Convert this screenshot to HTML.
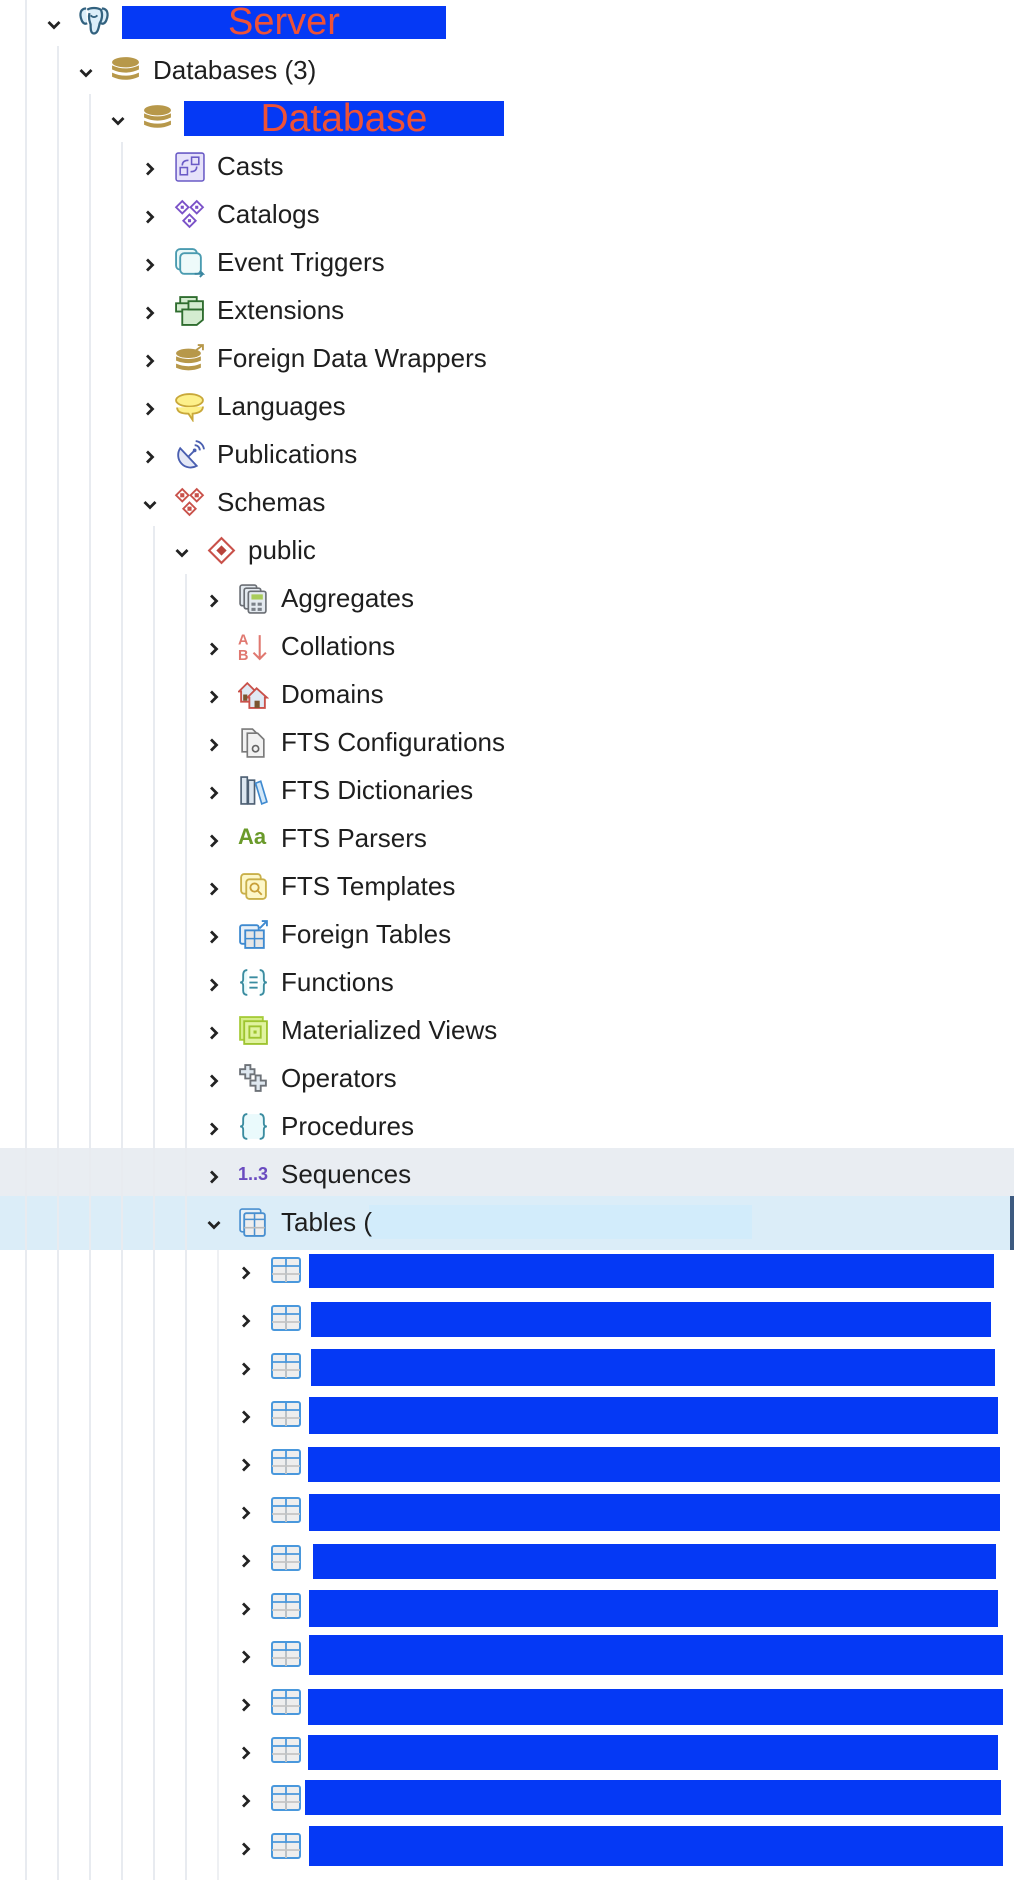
<!DOCTYPE html>
<html><head><meta charset="utf-8"><style>
body{margin:0;width:1014px;height:1880px;background:#fff;position:relative;overflow:hidden;font-family:"Liberation Sans",Arial,sans-serif;}
.vl{position:absolute;width:2px;background:#e8ebf0;bottom:0}
.band{position:absolute;left:0;width:1014px}
.c{position:absolute;width:14px;height:14px}
.i{position:absolute;width:31px;height:31px}
.t{position:absolute;font-size:26px;line-height:50px;color:#1e1e1e;white-space:nowrap}
.b{position:absolute;background:#0539f5;height:37px}
</style></head><body>
<div class="band" style="top:1148px;height:48px;background:#e9edf2"></div>
<div class="band" style="top:1196px;height:54px;background:#dbedf8"></div>
<div style="position:absolute;left:369px;top:1205px;width:383px;height:34px;background:#d2ecfb"></div>
<div style="position:absolute;left:1010px;top:1196px;width:4px;height:54px;background:#3d5a80"></div>

<div class="vl" style="left:25px;top:0"></div>
<div class="vl" style="left:57px;top:46px"></div>
<div class="vl" style="left:89px;top:94px"></div>
<div class="vl" style="left:121px;top:142px"></div>
<div class="vl" style="left:153px;top:526px"></div>
<div class="vl" style="left:185px;top:574px"></div>
<div class="vl" style="left:217px;top:1250px;background:#eef0f3"></div>
<div class="band" style="top:1148px;height:48px;background:#e9edf2;left:190px;width:824px"></div>

<svg width="0" height="0" style="position:absolute"><defs>
<symbol id="tb" viewBox="0 0 30 26"><rect x="1" y="1" width="28" height="24" rx="2" fill="#eeeeee" stroke="#4a98dc" stroke-width="2"/><path d="M15 1 L15 25 M1 9 L29 9" stroke="#4a98dc" stroke-width="1.8"/><path d="M1 17 L29 17" stroke="#c4c4c4" stroke-width="1.8"/><path d="M15 10 L15 25" stroke="#c4c4c4" stroke-width="1.8"/></symbol>
<symbol id="ch" viewBox="0 0 14 14"><path d="M4 1.5 L9.5 7 L4 12.5" fill="none" stroke="#222" stroke-width="2.8"/></symbol>
<symbol id="dn" viewBox="0 0 14 14"><path d="M1.5 4 L7 9.5 L12.5 4" fill="none" stroke="#222" stroke-width="2.8"/></symbol>
</defs></svg>

<!-- Server row -->
<svg class="c" style="left:47px;top:18px"><use href="#dn"/></svg>
<svg class="i" style="left:77px;top:4px;width:34px;height:34px" viewBox="0 0 30 30"><path d="M8 4 C3 4 2 9 4 14 C5 17 7 18 9 17 M22 4 C27 4 28 9 26 14 C25 17 23 18 21 17 M9 5 C12 3 18 3 21 5 C23 9 22 14 20 17 C19 22 18 26 15 26 C12 26 12 22 12 18 C11 15 10 12 11 8" fill="#dbeef9" stroke="#33627f" stroke-width="2"/><path d="M12 10 C14 12 16 12 18 10" fill="none" stroke="#33627f" stroke-width="1.6"/></svg>
<div style="position:absolute;left:122px;top:6px;width:324px;height:33px;background:#0539f5"></div>
<div style="position:absolute;left:122px;top:2px;width:324px;text-align:center;font-size:38px;line-height:40px;color:#ee5237">Server</div>

<!-- Databases -->
<svg class="c" style="left:79px;top:66px"><use href="#dn"/></svg>
<svg class="i" style="left:110px;top:55px" viewBox="0 0 30 30"><g fill="#b7984a"><ellipse cx="15" cy="7" rx="13" ry="5"/><path d="M2 10 Q15 16 28 10 L28 14 Q15 20 2 14Z"/><path d="M2 17 Q15 23 28 17 L28 21 Q15 27 2 21Z"/></g></svg>
<div class="t" style="left:153px;top:45px">Databases (3)</div>

<!-- Database -->
<svg class="c" style="left:111px;top:114px"><use href="#dn"/></svg>
<svg class="i" style="left:142px;top:103px" viewBox="0 0 30 30"><g fill="#b7984a"><ellipse cx="15" cy="7" rx="13" ry="5"/><path d="M2 10 Q15 16 28 10 L28 14 Q15 20 2 14Z"/><path d="M2 17 Q15 23 28 17 L28 21 Q15 27 2 21Z"/></g></svg>
<div style="position:absolute;left:184px;top:101px;width:320px;height:35px;background:#0539f5"></div>
<div style="position:absolute;left:184px;top:98px;width:320px;text-align:center;font-size:39px;line-height:42px;color:#ee5237">Database</div>

<!-- level 3 rows -->
<svg class="c" style="left:143px;top:162px"><use href="#ch"/></svg>
<svg class="i" style="left:174px;top:151px" viewBox="0 0 30 30"><rect x="2" y="2" width="27" height="27" rx="2" fill="#e6e2fa" stroke="#6a5bc6" stroke-width="1.5"/><rect x="6" y="16" width="7" height="7" fill="none" stroke="#6a5bc6" stroke-width="1.5"/><rect x="17" y="6" width="7" height="7" fill="none" stroke="#6a5bc6" stroke-width="1.5"/><path d="M8 14 Q8 9 14 9 M22 15 Q22 20 16 20" fill="none" stroke="#6a5bc6" stroke-width="1.5"/></svg>
<div class="t" style="left:217px;top:141px">Casts</div>

<svg class="c" style="left:143px;top:210px"><use href="#ch"/></svg>
<svg class="i" style="left:174px;top:199px" viewBox="0 0 30 30"><g fill="none" stroke="#7b52c8" stroke-width="1.8"><path d="M8 2 L14 8 L8 14 L2 8Z M22 2 L28 8 L22 14 L16 8Z M15 15 L21 21 L15 27 L9 21Z"/></g><g fill="#7b52c8"><rect x="6.5" y="6.5" width="3" height="3"/><rect x="20.5" y="6.5" width="3" height="3"/><rect x="13.5" y="19.5" width="3" height="3"/></g></svg>
<div class="t" style="left:217px;top:189px">Catalogs</div>

<svg class="c" style="left:143px;top:258px"><use href="#ch"/></svg>
<svg class="i" style="left:174px;top:247px" viewBox="0 0 30 30"><rect x="2" y="2" width="20" height="20" rx="4" fill="#e8f8f8" stroke="#4a9bb0" stroke-width="1.8"/><rect x="6" y="6" width="20" height="20" rx="4" fill="#eefafa" stroke="#4a9bb0" stroke-width="1.8"/><path d="M20 26 L28 26 L25 23 M28 26 L25 29" fill="none" stroke="#3a86a0" stroke-width="1.8"/></svg>
<div class="t" style="left:217px;top:237px">Event Triggers</div>

<svg class="c" style="left:143px;top:306px"><use href="#ch"/></svg>
<svg class="i" style="left:174px;top:295px" viewBox="0 0 30 30"><g fill="#d4ecd0" stroke="#2f6d2f" stroke-width="1.8"><rect x="6" y="2" width="16" height="8"/><rect x="2" y="8" width="14" height="8"/><path d="M8 14 L28 14 L28 24 L22 29 L8 29Z"/><rect x="14" y="6" width="14" height="8"/></g></svg>
<div class="t" style="left:217px;top:285px">Extensions</div>

<svg class="c" style="left:143px;top:354px"><use href="#ch"/></svg>
<svg class="i" style="left:174px;top:343px" viewBox="0 0 30 30"><g fill="#b7984a"><ellipse cx="14" cy="10" rx="12" ry="4.5"/><path d="M2 13 Q14 18 26 13 L26 17 Q14 22 2 17Z"/><path d="M2 20 Q14 25 26 20 L26 24 Q14 29 2 24Z"/></g><path d="M20 8 L28 2 M23 2 L28 2 L28 7" fill="none" stroke="#b7984a" stroke-width="1.8"/></svg>
<div class="t" style="left:217px;top:333px">Foreign Data Wrappers</div>

<svg class="c" style="left:143px;top:402px"><use href="#ch"/></svg>
<svg class="i" style="left:174px;top:391px" viewBox="0 0 30 30"><g fill="#fdf08a" stroke="#c9a83a" stroke-width="1.8"><ellipse cx="15" cy="9" rx="13" ry="6"/><path d="M3 16 Q3 22 14 22 L18 28 L18 22 Q28 21 28 15"/></g></svg>
<div class="t" style="left:217px;top:381px">Languages</div>

<svg class="c" style="left:143px;top:450px"><use href="#ch"/></svg>
<svg class="i" style="left:174px;top:439px" viewBox="0 0 30 30"><path d="M6 9 A12 12 0 0 0 22 26 Z" fill="#e4e8f6" stroke="#4a5fb0" stroke-width="1.8"/><path d="M14 17 L20 11 M20 6 A5 5 0 0 1 25 11 M21 2 A9 9 0 0 1 29 10" fill="none" stroke="#4a5fb0" stroke-width="1.8"/><circle cx="20" cy="11" r="1.8" fill="#4a5fb0"/></svg>
<div class="t" style="left:217px;top:429px">Publications</div>

<svg class="c" style="left:143px;top:498px"><use href="#dn"/></svg>
<svg class="i" style="left:174px;top:487px" viewBox="0 0 30 30"><g fill="none" stroke="#c9514a" stroke-width="1.8"><path d="M8 2 L14 8 L8 14 L2 8Z M22 2 L28 8 L22 14 L16 8Z M15 15 L21 21 L15 27 L9 21Z"/></g><g fill="#c9514a"><rect x="6" y="6" width="4" height="4"/><rect x="20" y="6" width="4" height="4"/><rect x="13" y="19" width="4" height="4"/></g></svg>
<div class="t" style="left:217px;top:477px">Schemas</div>

<!-- public -->
<svg class="c" style="left:175px;top:546px"><use href="#dn"/></svg>
<svg class="i" style="left:206px;top:535px" viewBox="0 0 30 30"><path d="M15 3 L27 15 L15 27 L3 15Z" fill="#fff" stroke="#c9514a" stroke-width="2"/><path d="M15 10 L20 15 L15 20 L10 15Z" fill="#b8443c"/></svg>
<div class="t" style="left:248px;top:525px">public</div>

<!-- level 5 -->
<svg class="c" style="left:207px;top:594px"><use href="#ch"/></svg>
<svg class="i" style="left:238px;top:583px" viewBox="0 0 30 30"><g stroke="#6b6f75" stroke-width="1.6"><rect x="2" y="2" width="16" height="20" rx="2" fill="#e4eaf0"/><rect x="6" y="5" width="16" height="20" rx="2" fill="#e4eaf0"/><rect x="10" y="8" width="17" height="21" rx="2" fill="#e4eaf0"/></g><rect x="13" y="11" width="11" height="5" fill="#a9cc5a"/><g fill="#7a8088"><rect x="13" y="19" width="4" height="3"/><rect x="19" y="19" width="4" height="3"/><rect x="13" y="24" width="4" height="3"/><rect x="19" y="24" width="4" height="3"/></g></svg>
<div class="t" style="left:281px;top:573px">Aggregates</div>

<svg class="c" style="left:207px;top:642px"><use href="#ch"/></svg>
<svg class="i" style="left:238px;top:631px" viewBox="0 0 30 30"><text x="0" y="13" font-family="Liberation Sans" font-weight="bold" font-size="14" fill="#e07870">A</text><text x="0" y="28" font-family="Liberation Sans" font-weight="bold" font-size="14" fill="#e07870">B</text><path d="M21 4 L21 27 M15 21 L21 27 L27 21" fill="none" stroke="#e07870" stroke-width="2"/></svg>
<div class="t" style="left:281px;top:621px">Collations</div>

<svg class="c" style="left:207px;top:690px"><use href="#ch"/></svg>
<svg class="i" style="left:238px;top:679px" viewBox="0 0 30 30"><path d="M1 12 L9 4 L17 12 L17 22 L3 22 L3 12Z" fill="#dfe9f4" stroke="#c9514a" stroke-width="1.8"/><path d="M9 18 L18 9 L28 18 L26 18 L26 28 L11 28 L11 18Z" fill="#dfe9f4" stroke="#c9514a" stroke-width="1.8"/><rect x="5" y="15" width="4" height="6" fill="#7a5530"/><rect x="16" y="21" width="5" height="7" fill="#7a5530"/></svg>
<div class="t" style="left:281px;top:669px">Domains</div>

<svg class="c" style="left:207px;top:738px"><use href="#ch"/></svg>
<svg class="i" style="left:238px;top:727px" viewBox="0 0 30 30"><g fill="#f2f2f2" stroke="#7a7a7a" stroke-width="1.6"><path d="M4 2 L14 2 L18 6 L18 24 L4 24Z"/><path d="M9 6 L19 6 L25 12 L25 29 L9 29Z"/></g><circle cx="17" cy="21" r="3" fill="none" stroke="#666" stroke-width="1.6"/></svg>
<div class="t" style="left:281px;top:717px">FTS Configurations</div>

<svg class="c" style="left:207px;top:786px"><use href="#ch"/></svg>
<svg class="i" style="left:238px;top:775px" viewBox="0 0 30 30"><rect x="3" y="2" width="6" height="26" fill="#dce6f0" stroke="#4d5f73" stroke-width="1.6"/><rect x="10" y="5" width="6" height="23" fill="#dce6f0" stroke="#4d5f73" stroke-width="1.6"/><path d="M17 8 L22 6 L28 26 L23 28Z" fill="#d4e8f8" stroke="#3f8ad0" stroke-width="1.6"/></svg>
<div class="t" style="left:281px;top:765px">FTS Dictionaries</div>

<svg class="c" style="left:207px;top:834px"><use href="#ch"/></svg>
<div style="position:absolute;left:238px;top:822px;font-size:22px;line-height:30px;font-weight:bold;color:#6a9a2a">Aa</div>
<div class="t" style="left:281px;top:813px">FTS Parsers</div>

<svg class="c" style="left:207px;top:882px"><use href="#ch"/></svg>
<svg class="i" style="left:238px;top:871px" viewBox="0 0 30 30"><rect x="3" y="3" width="19" height="19" rx="3" fill="#fdf7c8" stroke="#c9b04a" stroke-width="1.8"/><rect x="8" y="8" width="19" height="19" rx="3" fill="#fdf7c8" stroke="#c9b04a" stroke-width="1.8"/><circle cx="16" cy="16" r="4" fill="none" stroke="#c9a03a" stroke-width="1.8"/><path d="M19 19 L23 23" stroke="#c9a03a" stroke-width="1.8"/></svg>
<div class="t" style="left:281px;top:861px">FTS Templates</div>

<svg class="c" style="left:207px;top:930px"><use href="#ch"/></svg>
<svg class="i" style="left:238px;top:919px" viewBox="0 0 30 30"><rect x="2" y="6" width="18" height="18" rx="2" fill="#e8f0f8" stroke="#3f8ad0" stroke-width="1.8"/><rect x="7" y="11" width="18" height="17" fill="#e6e6e6" stroke="#3f8ad0" stroke-width="1.8"/><path d="M16 11 L16 28 M7 19 L25 19" stroke="#3f8ad0" stroke-width="1.5"/><path d="M21 9 L28 2 M23 2 L28 2 L28 7" fill="none" stroke="#3f8ad0" stroke-width="1.8"/></svg>
<div class="t" style="left:281px;top:909px">Foreign Tables</div>

<svg class="c" style="left:207px;top:978px"><use href="#ch"/></svg>
<svg class="i" style="left:238px;top:967px" viewBox="0 0 30 30"><path d="M9 3 Q5 3 5 8 L5 12 Q5 15 2 15 Q5 15 5 18 L5 23 Q5 27 9 27 M21 3 Q25 3 25 8 L25 12 Q25 15 28 15 Q25 15 25 18 L25 23 Q25 27 21 27" fill="#eafafc" stroke="#3a8ca0" stroke-width="1.8"/><path d="M11 10 L19 10 M11 15 L19 15 M11 20 L19 20" stroke="#3a8ca0" stroke-width="1.8"/></svg>
<div class="t" style="left:281px;top:957px">Functions</div>

<svg class="c" style="left:207px;top:1026px"><use href="#ch"/></svg>
<svg class="i" style="left:238px;top:1015px" viewBox="0 0 30 30"><rect x="2" y="2" width="22" height="22" fill="#d6ee8a" stroke="#a6cc3a" stroke-width="1.8"/><rect x="6" y="6" width="22" height="22" fill="#e0f3a0" stroke="#9ec430" stroke-width="1.8"/><rect x="11" y="11" width="11" height="11" fill="none" stroke="#9ec430" stroke-width="1.8"/><rect x="15" y="15" width="3" height="3" fill="#9ec430"/></svg>
<div class="t" style="left:281px;top:1005px">Materialized Views</div>

<svg class="c" style="left:207px;top:1074px"><use href="#ch"/></svg>
<svg class="i" style="left:238px;top:1063px" viewBox="0 0 30 30"><path d="M7 2 L12 2 L12 6 L16 6 L16 11 L12 11 L12 15 L7 15 L7 11 L2 11 L2 6 L7 6Z" fill="#dfe8f0" stroke="#6d7278" stroke-width="1.8"/><path d="M17 12 L22 12 L22 17 L27 17 L27 22 L22 22 L22 27 L17 27 L17 22 L12 22 L12 17 L17 17Z" fill="#dfe8f0" stroke="#6d7278" stroke-width="1.8"/></svg>
<div class="t" style="left:281px;top:1053px">Operators</div>

<svg class="c" style="left:207px;top:1122px"><use href="#ch"/></svg>
<svg class="i" style="left:238px;top:1111px" viewBox="0 0 30 30"><path d="M9 3 Q5 3 5 8 L5 12 Q5 15 2 15 Q5 15 5 18 L5 23 Q5 27 9 27 L21 27 Q25 27 25 23 L25 18 Q25 15 28 15 Q25 15 25 12 L25 8 Q25 3 21 3Z" fill="#eafafc" stroke="none"/><path d="M9 3 Q5 3 5 8 L5 12 Q5 15 2 15 Q5 15 5 18 L5 23 Q5 27 9 27 M21 3 Q25 3 25 8 L25 12 Q25 15 28 15 Q25 15 25 18 L25 23 Q25 27 21 27" fill="none" stroke="#3a8ca0" stroke-width="1.8"/></svg>
<div class="t" style="left:281px;top:1101px">Procedures</div>

<svg class="c" style="left:207px;top:1170px"><use href="#ch"/></svg>
<div style="position:absolute;left:238px;top:1160px;font-size:18px;line-height:28px;font-weight:bold;color:#6a4bc0">1..3</div>
<div class="t" style="left:281px;top:1149px">Sequences</div>

<svg class="c" style="left:207px;top:1218px"><use href="#dn"/></svg>
<svg class="i" style="left:238px;top:1207px" viewBox="0 0 30 30"><rect x="2" y="2" width="20" height="22" rx="2" fill="#e6f0f8" stroke="#4a90d0" stroke-width="1.6"/><rect x="6" y="6" width="20" height="22" rx="2" fill="#eeeeee" stroke="#4a90d0" stroke-width="1.8"/><path d="M6 12 L26 12 M16 6 L16 28" stroke="#4a90d0" stroke-width="1.5"/><path d="M6 20 L26 20" stroke="#bbb" stroke-width="1.5"/></svg>
<div class="t" style="left:281px;top:1197px">Tables (</div>

<!-- table rows -->
<svg class="c" style="left:239px;top:1266px"><use href="#ch"/></svg><svg style="position:absolute;left:271px;top:1257px;width:30px;height:26px"><use href="#tb"/></svg><div class="b" style="left:309px;top:1254px;width:685px;height:34px"></div>
<svg class="c" style="left:239px;top:1314px"><use href="#ch"/></svg><svg style="position:absolute;left:271px;top:1305px;width:30px;height:26px"><use href="#tb"/></svg><div class="b" style="left:311px;top:1302px;width:680px;height:35px"></div>
<svg class="c" style="left:239px;top:1362px"><use href="#ch"/></svg><svg style="position:absolute;left:271px;top:1353px;width:30px;height:26px"><use href="#tb"/></svg><div class="b" style="left:311px;top:1349px;width:684px;height:37px"></div>
<svg class="c" style="left:239px;top:1410px"><use href="#ch"/></svg><svg style="position:absolute;left:271px;top:1401px;width:30px;height:26px"><use href="#tb"/></svg><div class="b" style="left:309px;top:1397px;width:689px;height:37px"></div>
<svg class="c" style="left:239px;top:1458px"><use href="#ch"/></svg><svg style="position:absolute;left:271px;top:1449px;width:30px;height:26px"><use href="#tb"/></svg><div class="b" style="left:308px;top:1447px;width:692px;height:35px"></div>
<svg class="c" style="left:239px;top:1506px"><use href="#ch"/></svg><svg style="position:absolute;left:271px;top:1497px;width:30px;height:26px"><use href="#tb"/></svg><div class="b" style="left:309px;top:1494px;width:691px;height:37px"></div>
<svg class="c" style="left:239px;top:1554px"><use href="#ch"/></svg><svg style="position:absolute;left:271px;top:1545px;width:30px;height:26px"><use href="#tb"/></svg><div class="b" style="left:313px;top:1544px;width:683px;height:35px"></div>
<svg class="c" style="left:239px;top:1602px"><use href="#ch"/></svg><svg style="position:absolute;left:271px;top:1593px;width:30px;height:26px"><use href="#tb"/></svg><div class="b" style="left:309px;top:1590px;width:689px;height:37px"></div>
<svg class="c" style="left:239px;top:1650px"><use href="#ch"/></svg><svg style="position:absolute;left:271px;top:1641px;width:30px;height:26px"><use href="#tb"/></svg><div class="b" style="left:309px;top:1635px;width:694px;height:40px"></div>
<svg class="c" style="left:239px;top:1698px"><use href="#ch"/></svg><svg style="position:absolute;left:271px;top:1689px;width:30px;height:26px"><use href="#tb"/></svg><div class="b" style="left:308px;top:1689px;width:695px;height:36px"></div>
<svg class="c" style="left:239px;top:1746px"><use href="#ch"/></svg><svg style="position:absolute;left:271px;top:1737px;width:30px;height:26px"><use href="#tb"/></svg><div class="b" style="left:308px;top:1735px;width:690px;height:35px"></div>
<svg class="c" style="left:239px;top:1794px"><use href="#ch"/></svg><svg style="position:absolute;left:271px;top:1785px;width:30px;height:26px"><use href="#tb"/></svg><div class="b" style="left:305px;top:1780px;width:696px;height:35px"></div>
<svg class="c" style="left:239px;top:1842px"><use href="#ch"/></svg><svg style="position:absolute;left:271px;top:1833px;width:30px;height:26px"><use href="#tb"/></svg><div class="b" style="left:309px;top:1826px;width:694px;height:40px"></div>
</body></html>
